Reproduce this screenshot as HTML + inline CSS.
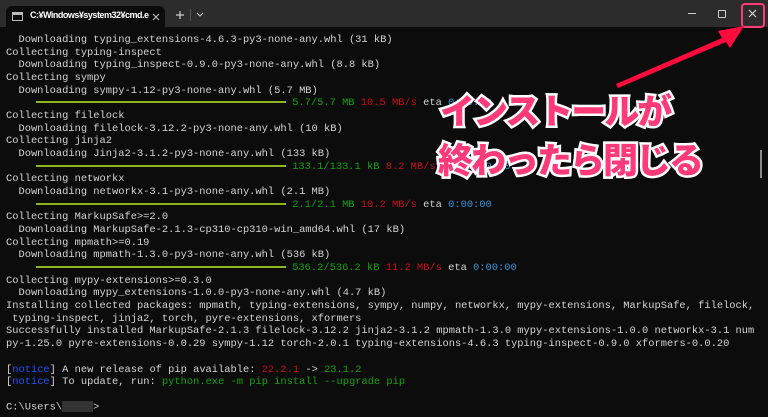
<!DOCTYPE html>
<html><head><meta charset="utf-8"><style>
*{margin:0;padding:0;box-sizing:border-box}
body{width:768px;height:417px;overflow:hidden;background:#0c0c0c;position:relative;font-family:"Liberation Mono",monospace}
#bar{position:absolute;left:0;top:0;width:768px;height:27px;background:#2c2c2c}
#tab{position:absolute;left:6px;top:6px;width:159px;height:21px;background:#0c0c0c;border-radius:6px 6px 0 0}
#tab .t{position:absolute;left:24px;top:4px;font:bold 9px "Liberation Sans",sans-serif;color:#fff;letter-spacing:-0.5px}
.l{position:absolute;left:6px;font-size:10.4px;color:#d4d4d4;white-space:pre;line-height:12px}
.g{color:#13a10e}.r{color:#c50f1f}.b{color:#3a96dd}.n{color:#2450ff}
.bar{display:inline-block;width:250px;height:2px;background:#8db51f;vertical-align:middle;margin-right:6px;margin-left:-1px}
.ann{position:absolute;font-family:"Noto Sans CJK JP",sans-serif;font-weight:900;font-size:35px;color:#ff3a78;-webkit-text-stroke:5px #fff;paint-order:stroke fill;white-space:nowrap;letter-spacing:-2px;line-height:1}
</style></head><body>
<div id="bar">
 <div id="tab">
  <svg style="position:absolute;left:6px;top:6px" width="11" height="9"><rect x="0.5" y="0.5" width="10" height="8" fill="none" stroke="#bbb"/><rect x="1" y="1" width="9" height="2" fill="#bbb"/></svg>
  <div class="t">C:¥Windows¥system32¥cmd.e</div>
  <svg style="position:absolute;left:146px;top:7px" width="8" height="8"><path d="M1 1L7 7M7 1L1 7" stroke="#ccc" stroke-width="1"/></svg>
 </div>
 <svg style="position:absolute;left:175px;top:10px" width="10" height="10"><path d="M5 1V9M1 5H9" stroke="#ccc" stroke-width="1.2"/></svg>
 <div style="position:absolute;left:190px;top:9px;width:1px;height:12px;background:#555"></div>
 <svg style="position:absolute;left:196px;top:12px" width="8" height="6"><path d="M1 1L4 4L7 1" stroke="#ccc" fill="none"/></svg>
 <div style="position:absolute;left:688px;top:13px;width:8px;height:1px;background:#ccc"></div>
 <div style="position:absolute;left:718px;top:10px;width:8px;height:8px;border:1px solid #ccc;border-radius:1px"></div>
 <svg style="position:absolute;left:748px;top:9px" width="9" height="9"><path d="M1 1L8 8M8 1L1 8" stroke="#ddd" stroke-width="1.1"/></svg>
 <div style="position:absolute;left:741px;top:3px;width:24px;height:25px;border:2.5px solid #ff3a78;border-radius:4px"></div>
</div>
<div class="l" style="top:34px">  Downloading typing_extensions-4.6.3-py3-none-any.whl (31 kB)</div>
<div class="l" style="top:47px">Collecting typing-inspect</div>
<div class="l" style="top:59px">  Downloading typing_inspect-0.9.0-py3-none-any.whl (8.8 kB)</div>
<div class="l" style="top:72px">Collecting sympy</div>
<div class="l" style="top:85px">  Downloading sympy-1.12-py3-none-any.whl (5.7 MB)</div>
<div class="l" style="top:97px">     <span class="bar"></span><span class="g">5.7/5.7 MB</span> <span class="r">10.5 MB/s</span> eta <span class="b">0:00:00</span></div>
<div class="l" style="top:110px">Collecting filelock</div>
<div class="l" style="top:123px">  Downloading filelock-3.12.2-py3-none-any.whl (10 kB)</div>
<div class="l" style="top:135px">Collecting jinja2</div>
<div class="l" style="top:148px">  Downloading Jinja2-3.1.2-py3-none-any.whl (133 kB)</div>
<div class="l" style="top:161px">     <span class="bar"></span><span class="g">133.1/133.1 kB</span> <span class="r">8.2 MB/s</span> eta <span class="b">0:00:00</span></div>
<div class="l" style="top:173px">Collecting networkx</div>
<div class="l" style="top:186px">  Downloading networkx-3.1-py3-none-any.whl (2.1 MB)</div>
<div class="l" style="top:199px">     <span class="bar"></span><span class="g">2.1/2.1 MB</span> <span class="r">10.2 MB/s</span> eta <span class="b">0:00:00</span></div>
<div class="l" style="top:211px">Collecting MarkupSafe&gt;=2.0</div>
<div class="l" style="top:224px">  Downloading MarkupSafe-2.1.3-cp310-cp310-win_amd64.whl (17 kB)</div>
<div class="l" style="top:237px">Collecting mpmath&gt;=0.19</div>
<div class="l" style="top:249px">  Downloading mpmath-1.3.0-py3-none-any.whl (536 kB)</div>
<div class="l" style="top:262px">     <span class="bar"></span><span class="g">536.2/536.2 kB</span> <span class="r">11.2 MB/s</span> eta <span class="b">0:00:00</span></div>
<div class="l" style="top:275px">Collecting mypy-extensions&gt;=0.3.0</div>
<div class="l" style="top:287px">  Downloading mypy_extensions-1.0.0-py3-none-any.whl (4.7 kB)</div>
<div class="l" style="top:300px">Installing collected packages: mpmath, typing-extensions, sympy, numpy, networkx, mypy-extensions, MarkupSafe, filelock,</div>
<div class="l" style="top:313px"> typing-inspect, jinja2, torch, pyre-extensions, xformers</div>
<div class="l" style="top:325px">Successfully installed MarkupSafe-2.1.3 filelock-3.12.2 jinja2-3.1.2 mpmath-1.3.0 mypy-extensions-1.0.0 networkx-3.1 num</div>
<div class="l" style="top:338px">py-1.25.0 pyre-extensions-0.0.29 sympy-1.12 torch-2.0.1 typing-extensions-4.6.3 typing-inspect-0.9.0 xformers-0.0.20</div>
<div class="l" style="top:364px">[<span class="n">notice</span>] A new release of pip available: <span class="r">22.2.1</span> -&gt; <span class="g">23.1.2</span></div>
<div class="l" style="top:376px">[<span class="n">notice</span>] To update, run: <span class="g">python.exe -m pip install --upgrade pip</span></div>
<div class="l" style="top:401px">C:\Users\<span style="display:inline-block;width:31px;height:11px;background:#333;vertical-align:middle"></span>&gt;</div>
<div style="position:absolute;left:760px;top:150px;width:2px;height:28px;background:#888"></div>
<svg style="position:absolute;left:0;top:0" width="768" height="417"><path d="M616 84L722 38L718 31L744 26L730 48L726 42L618 88Z" fill="#ff0a3c"/></svg>
<div class="ann" style="left:440px;top:92px">インストールが</div>
<div class="ann" style="left:438px;top:141px">終わったら閉じる</div>
</body></html>
